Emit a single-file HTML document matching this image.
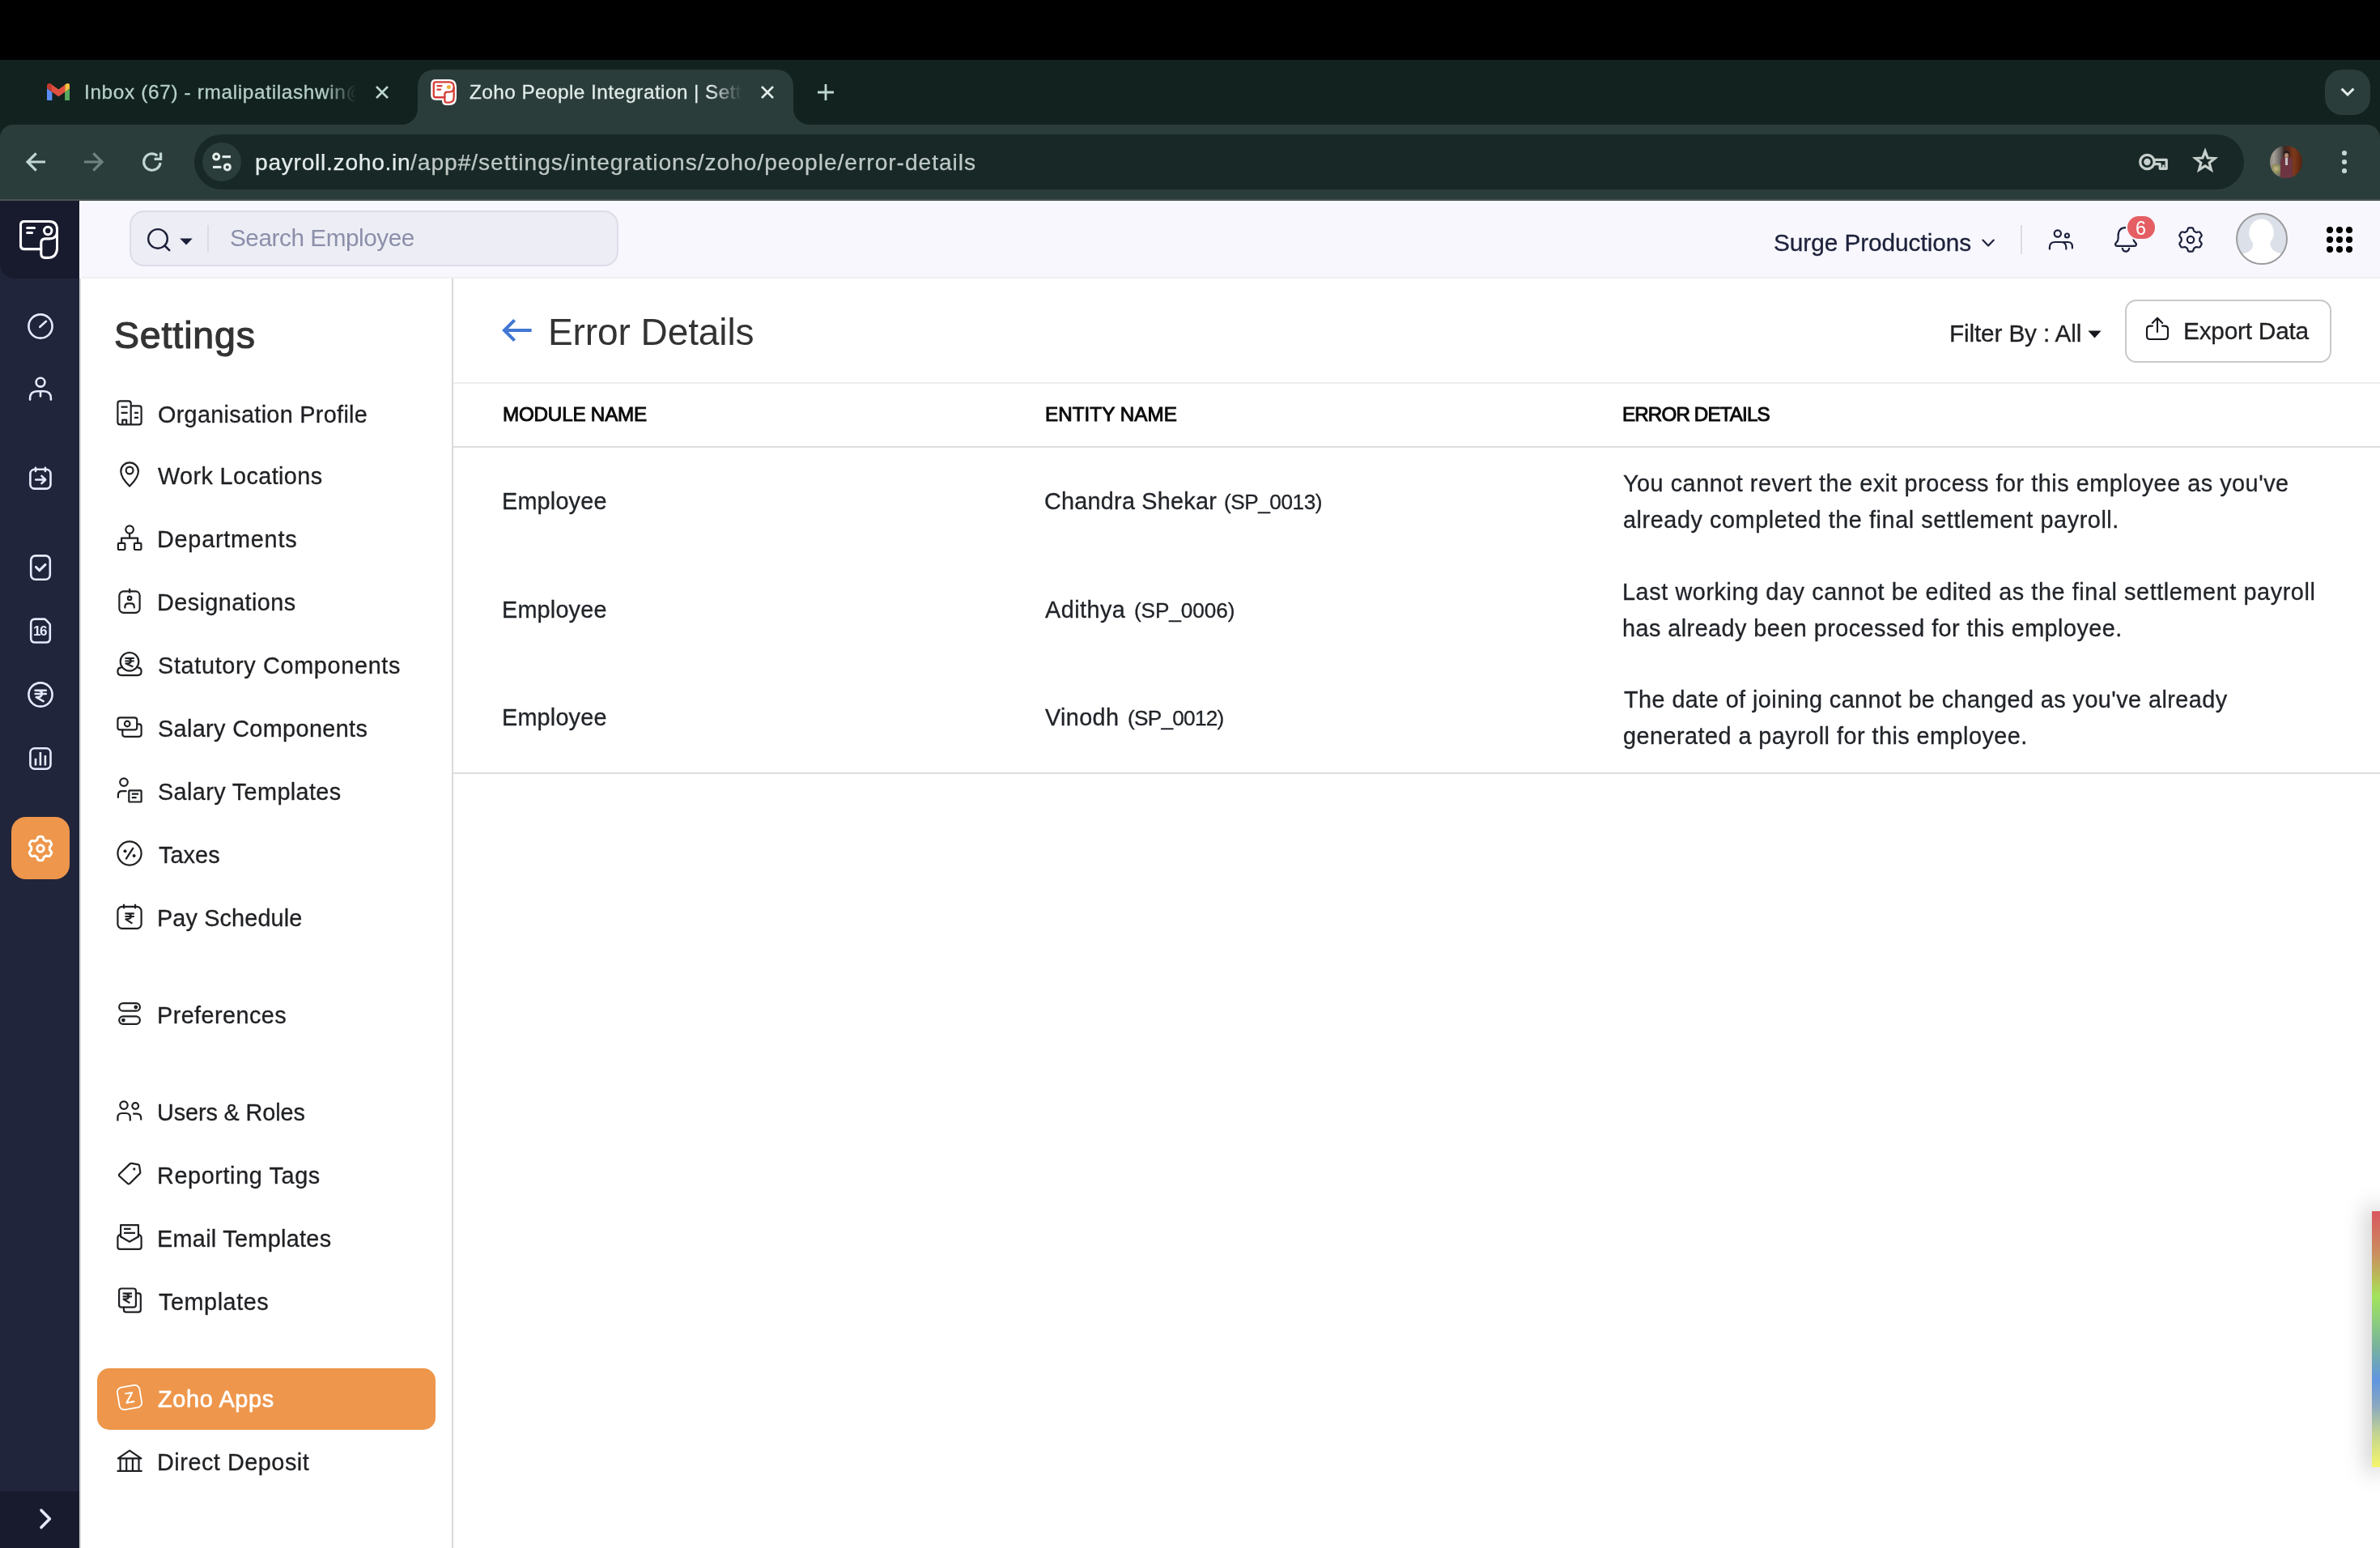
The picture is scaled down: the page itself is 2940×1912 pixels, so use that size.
<!DOCTYPE html>
<html lang="en">
<head>
<meta charset="utf-8">
<title>Zoho People Integration | Settings | Zoho Payroll</title>
<style>
html,body{margin:0;padding:0;background:#fff;}
body{width:2940px;height:1912px;overflow:hidden;font-family:'Liberation Sans',sans-serif;}
#root{position:relative;width:2940px;height:1912px;overflow:hidden;background:#fff;will-change:transform;}
#root div,#root svg,#root span.t{position:absolute;display:block;}
#root span.t{white-space:pre;}
#root div.clip{overflow:hidden;}
#root div.clip span.t{position:absolute;}

</style>
</head>
<body>
<div id="root">
<div style="left:0px;top:0px;width:2940px;height:74px;background:#000;"></div>
<div style="left:0px;top:74px;width:2940px;height:110px;background:#12221f;"></div>
<div style="left:0px;top:154px;width:2940px;height:94px;background:#2b3d3b;border-radius:16px 16px 0 0;"></div>
<div style="left:0px;top:246px;width:2940px;height:2px;background:#4b5452;"></div>
<div style="left:516px;top:86px;width:464px;height:70px;background:#2b3d3b;border-radius:20px 20px 0 0;"></div>
<div style="left:496px;top:134px;width:20px;height:20px;background:radial-gradient(circle at 0 0, rgba(0,0,0,0) 19.5px, #2b3d3b 20.5px);"></div>
<div style="left:980px;top:134px;width:20px;height:20px;background:radial-gradient(circle at 100% 0, rgba(0,0,0,0) 19.5px, #2b3d3b 20.5px);"></div>
<svg style="left:57.8px;top:102.7px;" width="28.6" height="21.5" viewBox="0 0 28.6 21.5" fill="none"><path d="M0 6.1 L6.4 10.7 V21.5 H2 Q0 21.5 0 19.5 Z" fill="#5a8cf4"/><path d="M28.6 6.1 L22.1 10.7 V21.5 H26.6 Q28.6 21.5 28.6 19.5 Z" fill="#58a95f"/><path d="M28.6 6.1 V3.1 A3.1 3.1 0 0 0 23.8 0.5 L22.1 1.8 V10.7 Z" fill="#f4c042"/><path d="M0 6.1 V3.1 A3.1 3.1 0 0 1 4.8 0.5 L6.4 1.8 V10.7 Z" fill="#c23a2d"/><path d="M5.9 1.4 L14.3 7.5 L22.4 1.6 V10.6 L14.3 16.3 L5.9 10.3 Z" fill="#e0503f"/></svg>
<div class="clip" style="left:100px;top:90px;width:342px;height:48px;">
<span class="t" style="left:4px;top:10px;font-size:24.3px;line-height:27px;color:#b7cfca;letter-spacing:0.679px;-webkit-text-stroke:0.3px #b7cfca;">Inbox (67) - rmalipatilashwin@</span>
</div>
<div style="left:400px;top:90px;width:42px;height:48px;background:linear-gradient(90deg, rgba(18,34,31,0), #12221f 95%);"></div>
<svg style="left:462px;top:104px;" width="20" height="20" viewBox="0 0 20 20" fill="none"><path d="M3 3 L17 17 M17 3 L3 17" stroke="#bdd5d0" stroke-width="2.6"/></svg>
<svg style="left:531px;top:97px;" width="34" height="34" viewBox="0 0 34 34" fill="none"><path d="M7 0.9 H23.8 Q33 0.9 33 10.2 V23.4 Q33 33.1 23.4 33.1 H20.8 Q15 33.1 15 27.2 V26.7 H7 Q1.2 26.7 1.2 21 V6.7 Q1.2 0.9 7 0.9 Z" fill="#fff"/><path d="M7.2 4.35 H23.6 Q29.65 4.35 29.65 10.4 V23.2 Q29.65 29.65 23.2 29.65 H21 Q18.35 29.65 18.35 27 V23.25 H7.2 Q4.75 23.25 4.75 20.8 V6.8 Q4.75 4.35 7.2 4.35 Z" stroke="#d53c37" stroke-width="2.3" fill="#fff"/><path d="M18.35 23.25 V19.6 Q18.35 16.6 21.4 16.6 H24 Q29.65 16.6 29.65 11" stroke="#d53c37" stroke-width="2.3"/><path d="M9.4 9.2 H14.4 M9.4 13.6 H13.2" stroke="#d53c37" stroke-width="2.2" stroke-linecap="round"/><circle cx="23.4" cy="10.6" r="2.5" fill="#eeae3a"/></svg>
<div class="clip" style="left:576px;top:90px;width:342px;height:48px;">
<span class="t" style="left:4px;top:10px;font-size:24.3px;line-height:27px;color:#e1ebe8;letter-spacing:0.458px;-webkit-text-stroke:0.3px #e1ebe8;">Zoho People Integration | Sett</span>
</div>
<div style="left:878px;top:90px;width:40px;height:48px;background:linear-gradient(90deg, rgba(43,61,59,0), #2b3d3b 95%);"></div>
<svg style="left:938px;top:104px;" width="20" height="20" viewBox="0 0 20 20" fill="none"><path d="M3 3 L17 17 M17 3 L3 17" stroke="#e3edea" stroke-width="2.6"/></svg>
<svg style="left:1008px;top:102px;" width="24" height="24" viewBox="0 0 24 24" fill="none"><path d="M12 2 V22 M2 12 H22" stroke="#bfd7d2" stroke-width="2.8"/></svg>
<div style="left:2872px;top:86px;width:56px;height:56px;background:#2b3d3b;border-radius:21px;"></div>
<svg style="left:2888px;top:101.4px;" width="24" height="24" viewBox="0 0 24 24" fill="none"><path d="M4.6 8.6 L12 16 L19.4 8.6" stroke="#e3edea" stroke-width="3"/></svg>
<svg style="left:30px;top:186px;" width="28" height="28" viewBox="0 0 28 28" fill="none"><path d="M26 14 H4.4 M14.7 3.3 L4 14 L14.7 24.7" stroke="#c0d7d2" stroke-width="3.2"/></svg>
<svg style="left:102px;top:186px;" width="28" height="28" viewBox="0 0 28 28" fill="none"><path d="M2 14 H23.6 M13.3 3.3 L24 14 L13.3 24.7" stroke="#6f8480" stroke-width="3.2"/></svg>
<svg style="left:174px;top:186px;" width="28" height="28" viewBox="0 0 28 28" fill="none"><path d="M24 15 A10.2 10.2 0 1 1 20.4 6.2" stroke="#c0d7d2" stroke-width="3.2"/><path d="M24.6 2.4 V10.4 H16.6" stroke="#c0d7d2" stroke-width="3.2"/></svg>
<div style="left:240px;top:166px;width:2532px;height:68px;background:#172826;border-radius:34px;"></div>
<div style="left:250px;top:176px;width:48px;height:48px;background:#2b3d3b;border-radius:24px;"></div>
<svg style="left:260px;top:186px;" width="28" height="28" viewBox="0 0 28 28" fill="none"><circle cx="7.2" cy="7.6" r="3.5" stroke="#e3edea" stroke-width="3"/><path d="M14.6 7.6 H25" stroke="#e3edea" stroke-width="3.1"/><circle cx="20.8" cy="20.4" r="3.5" stroke="#e3edea" stroke-width="3"/><path d="M3 20.4 H13.4" stroke="#e3edea" stroke-width="3.1"/></svg>
<span class="t" style="left:315px;top:184px;font-size:28.2px;line-height:32px;color:#e3ecea;letter-spacing:0.714px;-webkit-text-stroke:0.25px #e3ecea;">payroll.zoho.in</span>
<span class="t" style="left:507px;top:184px;font-size:28.2px;line-height:32px;color:#bec8c5;letter-spacing:0.950px;-webkit-text-stroke:0.25px #bec8c5;">/app#/settings/integrations/zoho/people/error-details</span>
<svg style="left:2640px;top:184px;" width="40" height="32" viewBox="0 0 40 32" fill="none"><circle cx="12.4" cy="16" r="8.7" stroke="#c7d0cd" stroke-width="3.3"/><circle cx="12.4" cy="16" r="4.2" fill="#c7d0cd"/><path d="M20.6 13.4 H36.2 V24.3 H28.2 V18.7 H20.6" stroke="#c7d0cd" stroke-width="3.3" stroke-linejoin="round"/><path d="M32.4 19.6 V23" stroke="#c7d0cd" stroke-width="2.6"/></svg>
<svg style="left:2706px;top:181px;" width="36" height="36" viewBox="0 0 36 36" fill="none"><path d="M18.00 5.80 L21.17 14.03 L29.98 14.51 L23.14 20.07 L25.41 28.59 L18.00 23.80 L10.59 28.59 L12.86 20.07 L6.02 14.51 L14.83 14.03 Z" stroke="#c7d0cd" stroke-width="3.2" stroke-linejoin="miter"/></svg>
<div class="clip" style="left:2804px;top:180px;width:40px;height:40px;border-radius:20px;background:linear-gradient(90deg,#8f8a84 0%,#a39d95 12%,#6f6b68 30%,#3a2a26 44%,#5b2a18 58%,#7c3a1c 74%,#6a2d14 88%,#4e2110 100%);"><div style="left:1px;top:22px;width:13px;height:16px;border-radius:6px;background:radial-gradient(circle at 50% 40%,#c9b98a 0%,#8a8a5a 45%,rgba(90,80,60,0) 75%);"></div><div style="left:13px;top:13px;width:15px;height:29px;border-radius:7px 7px 3px 3px;background:#6d3541;"></div><div style="left:17px;top:6px;width:7px;height:9px;border-radius:4px;background:#2b1d1c;"></div><div style="left:18px;top:9px;width:5px;height:6px;border-radius:3px;background:#b38a74;"></div><div style="left:19px;top:15px;width:3px;height:9px;background:#c9c4c8;"></div></div>
<svg style="left:2890px;top:184px;" width="12" height="32" viewBox="0 0 12 32" fill="none"><circle cx="6" cy="5" r="3.1" fill="#c0d7d2"/><circle cx="6" cy="16" r="3.1" fill="#c0d7d2"/><circle cx="6" cy="27" r="3.1" fill="#c0d7d2"/></svg>
<div style="left:98px;top:248px;width:2842px;height:1664px;background:#fff;"></div>
<div style="left:100px;top:248px;width:2840px;height:94px;background:#f7f7fd;"></div>
<div style="left:100px;top:342px;width:2840px;height:2px;background:#efeff0;"></div>
<div style="left:0px;top:248px;width:98px;height:1664px;background:#21253b;"></div>
<div style="left:0px;top:248px;width:98px;height:96px;background:#181b2e;border-radius:0 0 0 18px;"></div>
<div style="left:0px;top:1842px;width:98px;height:70px;background:#181b2e;"></div>
<svg style="left:24px;top:272px;" width="48" height="48" viewBox="0 0 48 48" fill="none"><path d="M6 1.5 H36.5 Q46.6 1.5 46.6 11.6 V33 Q46.6 46.4 35 46.4 H31.6 Q26.8 46.4 26.8 41.6 V35.6 H6 Q1.5 35.6 1.5 31.1 V6 Q1.5 1.5 6 1.5 Z" stroke="#fff" stroke-width="3.1" stroke-linejoin="round"/><path d="M26.8 35.6 V28 Q26.8 22.9 31.9 22.9 H37.2 Q46.6 22.9 46.6 13.4" stroke="#fff" stroke-width="3.1"/><path d="M9.6 9.6 H18.6 M9.6 15.5 H15.6" stroke="#fff" stroke-width="3" stroke-linecap="round"/><circle cx="35.2" cy="13" r="4.7" stroke="#fff" stroke-width="3"/></svg>
<svg style="left:34.0px;top:387.0px;overflow:visible;" width="32" height="32" viewBox="0 0 32 32" fill="none"><circle cx="16" cy="16" r="14.6" stroke="#e6eaff" stroke-width="2.6" stroke-linecap="round" stroke-linejoin="round"/><path d="M15.3 16.8 L23 9.8" stroke="#e6eaff" stroke-width="2.6" stroke-linecap="round" stroke-linejoin="round"/></svg>
<svg style="left:34.0px;top:463.6px;overflow:visible;" width="32" height="32" viewBox="0 0 32 32" fill="none"><circle cx="16" cy="8.2" r="5.4" stroke="#e6eaff" stroke-width="2.6" stroke-linecap="round" stroke-linejoin="round"/><path d="M3.1 29.6 V28 Q3.1 19.2 11.9 19.2 H20.1 Q28.9 19.2 28.9 28 V29.6 M16 19.4 V25.4" stroke="#e6eaff" stroke-width="2.6" stroke-linecap="round" stroke-linejoin="round"/></svg>
<svg style="left:34.0px;top:575.0px;overflow:visible;" width="32" height="32" viewBox="0 0 32 32" fill="none"><rect x="3.4" y="4.8" width="25.1" height="23.8" rx="5.4" stroke="#e6eaff" stroke-width="2.6" stroke-linecap="round" stroke-linejoin="round"/><path d="M10 2.8 V7 M21.9 2.8 V7" stroke="#e6eaff" stroke-width="2.6" stroke-linecap="round" stroke-linejoin="round"/><path d="M10.2 17.5 H21.8 M17.4 12.9 L22.1 17.5 L17.4 22.2" stroke="#e6eaff" stroke-width="2.6" stroke-linecap="round" stroke-linejoin="round"/></svg>
<svg style="left:34.0px;top:684.8px;overflow:visible;" width="32" height="32" viewBox="0 0 32 32" fill="none"><rect x="4.2" y="1.4" width="23.6" height="29.3" rx="5.6" stroke="#e6eaff" stroke-width="2.6" stroke-linecap="round" stroke-linejoin="round"/><path d="M10.4 15.4 L14.7 19.6 L22 12.4" stroke="#e6eaff" stroke-width="2.99" stroke-linecap="round" stroke-linejoin="round"/></svg>
<svg style="left:34.0px;top:763.0px;overflow:visible;" width="32" height="32" viewBox="0 0 32 32" fill="none"><path d="M9.4 1.6 H20.4 Q21.6 1.6 22.6 2.6 L26.8 6.8 Q27.8 7.8 27.8 9 V25.4 Q27.8 30.5 22.6 30.5 H9.4 Q4.2 30.5 4.2 25.4 V6.8 Q4.2 1.6 9.4 1.6 Z" stroke="#e6eaff" stroke-width="2.6" stroke-linecap="round" stroke-linejoin="round"/></svg>
<span class="t" style="left:41px;top:770px;font-size:17px;line-height:19px;color:#e6eaff;letter-spacing:-1.400px;font-weight:700;">16</span>
<svg style="left:34.0px;top:841.9px;overflow:visible;" width="32" height="32" viewBox="0 0 32 32" fill="none"><circle cx="16" cy="16" r="14.6" stroke="#e6eaff" stroke-width="2.6" stroke-linecap="round" stroke-linejoin="round"/><path d="M9.6 10.8 H22.8 M9.6 15 H22.8 M10.6 10.8 H12.6 Q17.8 10.8 17.8 15 Q17.8 19.2 10.8 19.2 L19.6 24.2" stroke="#e6eaff" stroke-width="2.6" stroke-linecap="round" stroke-linejoin="round"/></svg>
<svg style="left:34.0px;top:920.9px;overflow:visible;" width="32" height="32" viewBox="0 0 32 32" fill="none"><rect x="3.4" y="3.3" width="25.1" height="25.4" rx="5.4" stroke="#e6eaff" stroke-width="2.6" stroke-linecap="round" stroke-linejoin="round"/><path d="M10 15.8 V24.4 M15.9 8 V24.4 M21.9 12 V24.4" stroke="#e6eaff" stroke-width="2.6" stroke-linecap="butt" stroke-linejoin="round"/></svg>
<div style="left:14px;top:1009px;width:72px;height:77px;background:#ee964b;border-radius:18px;"></div>
<svg style="left:34.0px;top:1032.0px;overflow:visible;" width="32" height="32" viewBox="0 0 32 32" fill="none"><path d="M27.3 16.0 L27.3 15.6 L27.3 15.2 L27.2 14.8 L27.3 14.4 L27.6 14.0 L28.1 13.4 L28.6 12.9 L29.1 12.2 L29.5 11.6 L29.7 11.0 L29.6 10.5 L29.4 10.0 L29.2 9.6 L29.0 9.1 L28.7 8.7 L28.5 8.2 L28.2 7.8 L27.9 7.4 L27.6 6.9 L27.2 6.6 L26.6 6.5 L25.8 6.5 L25.0 6.6 L24.3 6.8 L23.6 7.0 L23.0 7.0 L22.6 6.9 L22.3 6.6 L22.0 6.4 L21.7 6.2 L21.3 6.0 L21.0 5.8 L20.6 5.7 L20.3 5.4 L20.0 4.9 L19.8 4.3 L19.6 3.5 L19.3 2.7 L19.0 2.1 L18.5 1.6 L18.0 1.4 L17.5 1.4 L17.0 1.3 L16.5 1.3 L16.0 1.3 L15.5 1.3 L15.0 1.3 L14.5 1.4 L14.0 1.4 L13.5 1.6 L13.0 2.1 L12.7 2.7 L12.4 3.5 L12.2 4.3 L12.0 4.9 L11.7 5.4 L11.4 5.7 L11.0 5.8 L10.7 6.0 L10.4 6.2 L10.0 6.4 L9.7 6.6 L9.4 6.9 L9.0 7.0 L8.4 7.0 L7.7 6.8 L7.0 6.6 L6.2 6.5 L5.4 6.5 L4.8 6.6 L4.4 6.9 L4.1 7.4 L3.8 7.8 L3.5 8.2 L3.3 8.7 L3.0 9.1 L2.8 9.6 L2.6 10.0 L2.4 10.5 L2.3 11.0 L2.5 11.6 L2.9 12.2 L3.4 12.9 L3.9 13.4 L4.4 14.0 L4.7 14.4 L4.8 14.8 L4.7 15.2 L4.7 15.6 L4.7 16.0 L4.7 16.4 L4.7 16.8 L4.8 17.2 L4.7 17.6 L4.4 18.0 L3.9 18.6 L3.4 19.1 L2.9 19.8 L2.5 20.4 L2.3 21.0 L2.4 21.5 L2.6 22.0 L2.8 22.4 L3.0 22.9 L3.3 23.4 L3.5 23.8 L3.8 24.2 L4.1 24.6 L4.4 25.1 L4.8 25.4 L5.4 25.5 L6.2 25.5 L7.0 25.4 L7.7 25.2 L8.4 25.0 L9.0 25.0 L9.4 25.1 L9.7 25.4 L10.0 25.6 L10.3 25.8 L10.7 26.0 L11.0 26.2 L11.4 26.3 L11.7 26.6 L12.0 27.1 L12.2 27.7 L12.4 28.5 L12.7 29.3 L13.0 29.9 L13.5 30.4 L14.0 30.6 L14.5 30.6 L15.0 30.7 L15.5 30.7 L16.0 30.7 L16.5 30.7 L17.0 30.7 L17.5 30.6 L18.0 30.6 L18.5 30.4 L19.0 29.9 L19.3 29.3 L19.6 28.5 L19.8 27.7 L20.0 27.1 L20.3 26.6 L20.6 26.3 L21.0 26.2 L21.3 26.0 L21.7 25.8 L22.0 25.6 L22.3 25.4 L22.6 25.1 L23.0 25.0 L23.6 25.0 L24.3 25.2 L25.0 25.4 L25.8 25.5 L26.6 25.5 L27.2 25.4 L27.6 25.1 L27.9 24.6 L28.2 24.2 L28.5 23.8 L28.7 23.4 L29.0 22.9 L29.2 22.4 L29.4 22.0 L29.6 21.5 L29.7 21.0 L29.5 20.4 L29.1 19.8 L28.6 19.1 L28.1 18.6 L27.6 18.0 L27.3 17.6 L27.2 17.2 L27.3 16.8 L27.3 16.4 Z" stroke="#fff" stroke-width="3.0" stroke-linecap="round" stroke-linejoin="round"/><circle cx="16" cy="16" r="4.2" stroke="#fff" stroke-width="3.0" stroke-linecap="round" stroke-linejoin="round"/></svg>
<svg style="left:44px;top:1860px;" width="24" height="32" viewBox="0 0 24 32" fill="none"><path d="M7 5.4 L17.4 16 L7 26.6" stroke="#e6eaff" stroke-width="3.6" stroke-linecap="round" stroke-linejoin="round"/></svg>
<div style="left:160px;top:260px;width:604px;height:69px;background:#ededf5;border-radius:18px;box-sizing:border-box;border:2px solid #dcdde8;"></div>
<svg style="left:180px;top:279px;" width="34" height="34" viewBox="0 0 34 34" fill="none"><circle cx="15" cy="15.9" r="11.8" stroke="#1b1f38" stroke-width="2.4"/><path d="M23.6 24.5 L29.2 30.1" stroke="#1b1f38" stroke-width="2.6" stroke-linecap="round"/></svg>
<svg style="left:222px;top:294px;" width="16" height="9" viewBox="0 0 16 9" fill="none"><path d="M0.2 0.4 H15.8 L8 8.6 Z" fill="#1b1f38"/></svg>
<div style="left:256px;top:278px;width:2px;height:34px;background:#dcdce8;"></div>
<span class="t" style="left:284px;top:277px;font-size:29.7px;line-height:33px;color:#8b8fa9;letter-spacing:-0.429px;">Search Employee</span>
<span class="t" style="left:2191px;top:283px;font-size:29.8px;line-height:33px;color:#1d213b;letter-spacing:-0.062px;-webkit-text-stroke:0.3px #1d213b;">Surge Productions</span>
<svg style="left:2445px;top:291px;" width="22" height="18" viewBox="0 0 22 18" fill="none"><path d="M4.4 5.6 L11.1 12.4 L17.8 5.6" stroke="#1d213b" stroke-width="2.2" stroke-linecap="round" stroke-linejoin="round"/></svg>
<div style="left:2496px;top:278px;width:2px;height:36px;background:#dcdce8;"></div>
<svg style="left:2530px;top:281px;" width="32" height="32" viewBox="0 0 32 32" fill="none"><circle cx="11.8" cy="7.5" r="4.1" stroke="#1b1f3b" stroke-width="2.2"/><circle cx="23.4" cy="10" r="2.5" stroke="#1b1f3b" stroke-width="2.2"/><path d="M1.9 26.6 V24.6 Q1.9 18 8.5 18 H15.7 Q22.3 18 22.3 24.6 V26.6 M18 18 H24.4 Q29.9 18 29.9 23.5 V25.4" stroke="#1b1f3b" stroke-width="2.2" stroke-linecap="round"/></svg>
<svg style="left:2610px;top:278px;" width="32" height="36" viewBox="0 0 32 36" fill="none"><path d="M16 3.2 Q6.6 3.2 6.6 13 V16.6 Q6.6 19.4 4.4 21.4 Q2.6 23.2 3.2 24.6 Q3.6 25.8 5.4 25.8 H26.6 Q28.4 25.8 28.8 24.6 Q29.4 23.2 27.6 21.4 Q25.4 19.4 25.4 16.6 V13 Q25.4 3.2 16 3.2 Z" stroke="#1b1f3b" stroke-width="2.2" stroke-linejoin="round"/><path d="M11.8 28.8 Q12.6 32.6 16 32.6 Q19.4 32.6 20.2 28.8" stroke="#1b1f3b" stroke-width="2.2" stroke-linecap="round"/></svg>
<div style="left:2626px;top:264.6px;width:38px;height:32.6px;background:#e45e63;border-radius:16.3px;box-sizing:border-box;border:2px solid #f7f7fd;"></div>
<span class="t" style="left:2638px;top:269px;font-size:23.4px;line-height:26px;color:#fff;">6</span>
<svg style="left:2690.0px;top:279.7px;overflow:visible;" width="32" height="32" viewBox="0 0 32 32" fill="none"><path d="M27.3 16.0 L27.3 15.6 L27.3 15.2 L27.2 14.8 L27.3 14.4 L27.6 14.0 L28.1 13.4 L28.6 12.9 L29.1 12.2 L29.5 11.6 L29.7 11.0 L29.6 10.5 L29.4 10.0 L29.2 9.6 L29.0 9.1 L28.7 8.7 L28.5 8.2 L28.2 7.8 L27.9 7.4 L27.6 6.9 L27.2 6.6 L26.6 6.5 L25.8 6.5 L25.0 6.6 L24.3 6.8 L23.6 7.0 L23.0 7.0 L22.6 6.9 L22.3 6.6 L22.0 6.4 L21.7 6.2 L21.3 6.0 L21.0 5.8 L20.6 5.7 L20.3 5.4 L20.0 4.9 L19.8 4.3 L19.6 3.5 L19.3 2.7 L19.0 2.1 L18.5 1.6 L18.0 1.4 L17.5 1.4 L17.0 1.3 L16.5 1.3 L16.0 1.3 L15.5 1.3 L15.0 1.3 L14.5 1.4 L14.0 1.4 L13.5 1.6 L13.0 2.1 L12.7 2.7 L12.4 3.5 L12.2 4.3 L12.0 4.9 L11.7 5.4 L11.4 5.7 L11.0 5.8 L10.7 6.0 L10.4 6.2 L10.0 6.4 L9.7 6.6 L9.4 6.9 L9.0 7.0 L8.4 7.0 L7.7 6.8 L7.0 6.6 L6.2 6.5 L5.4 6.5 L4.8 6.6 L4.4 6.9 L4.1 7.4 L3.8 7.8 L3.5 8.2 L3.3 8.7 L3.0 9.1 L2.8 9.6 L2.6 10.0 L2.4 10.5 L2.3 11.0 L2.5 11.6 L2.9 12.2 L3.4 12.9 L3.9 13.4 L4.4 14.0 L4.7 14.4 L4.8 14.8 L4.7 15.2 L4.7 15.6 L4.7 16.0 L4.7 16.4 L4.7 16.8 L4.8 17.2 L4.7 17.6 L4.4 18.0 L3.9 18.6 L3.4 19.1 L2.9 19.8 L2.5 20.4 L2.3 21.0 L2.4 21.5 L2.6 22.0 L2.8 22.4 L3.0 22.9 L3.3 23.4 L3.5 23.8 L3.8 24.2 L4.1 24.6 L4.4 25.1 L4.8 25.4 L5.4 25.5 L6.2 25.5 L7.0 25.4 L7.7 25.2 L8.4 25.0 L9.0 25.0 L9.4 25.1 L9.7 25.4 L10.0 25.6 L10.3 25.8 L10.7 26.0 L11.0 26.2 L11.4 26.3 L11.7 26.6 L12.0 27.1 L12.2 27.7 L12.4 28.5 L12.7 29.3 L13.0 29.9 L13.5 30.4 L14.0 30.6 L14.5 30.6 L15.0 30.7 L15.5 30.7 L16.0 30.7 L16.5 30.7 L17.0 30.7 L17.5 30.6 L18.0 30.6 L18.5 30.4 L19.0 29.9 L19.3 29.3 L19.6 28.5 L19.8 27.7 L20.0 27.1 L20.3 26.6 L20.6 26.3 L21.0 26.2 L21.3 26.0 L21.7 25.8 L22.0 25.6 L22.3 25.4 L22.6 25.1 L23.0 25.0 L23.6 25.0 L24.3 25.2 L25.0 25.4 L25.8 25.5 L26.6 25.5 L27.2 25.4 L27.6 25.1 L27.9 24.6 L28.2 24.2 L28.5 23.8 L28.7 23.4 L29.0 22.9 L29.2 22.4 L29.4 22.0 L29.6 21.5 L29.7 21.0 L29.5 20.4 L29.1 19.8 L28.6 19.1 L28.1 18.6 L27.6 18.0 L27.3 17.6 L27.2 17.2 L27.3 16.8 L27.3 16.4 Z" stroke="#1b1f3b" stroke-width="2.2" stroke-linecap="round" stroke-linejoin="round"/><circle cx="16" cy="16" r="4.2" stroke="#1b1f3b" stroke-width="2.2" stroke-linecap="round" stroke-linejoin="round"/></svg>
<div class="clip" style="left:2762px;top:263px;width:64px;height:64px;border-radius:32px;background:#dce0e9;box-sizing:border-box;border:2px solid #9c9c9e;"><svg style="left:0;top:0" width="60" height="60" viewBox="0 0 60 60"><ellipse cx="29.5" cy="22.4" rx="15.2" ry="17" fill="#fff"/><path d="M19 34 Q21 45.5 7 48.4 L-2 51 V62 H62 V51 L54 48.2 Q39.5 45.5 40.5 34 Z" fill="#fff"/></svg></div>
<svg style="left:2874px;top:280px;" width="32" height="32" viewBox="0 0 32 32" fill="none"><circle cx="4" cy="4" r="4.05" fill="#000"/><circle cx="4" cy="16" r="4.05" fill="#000"/><circle cx="4" cy="28" r="4.05" fill="#000"/><circle cx="16" cy="4" r="4.05" fill="#000"/><circle cx="16" cy="16" r="4.05" fill="#000"/><circle cx="16" cy="28" r="4.05" fill="#000"/><circle cx="28" cy="4" r="4.05" fill="#000"/><circle cx="28" cy="16" r="4.05" fill="#000"/><circle cx="28" cy="28" r="4.05" fill="#000"/></svg>
<div style="left:98px;top:344px;width:2px;height:1568px;background:#d8d8d8;"></div>
<div style="left:558px;top:344px;width:2px;height:1568px;background:#dadada;"></div>
<span class="t" style="left:141px;top:388px;font-size:46.5px;line-height:52px;color:#333;letter-spacing:0.857px;-webkit-text-stroke:1.15px #333;">Settings</span>
<div style="left:120px;top:1690px;width:418px;height:76px;background:#ee964b;border-radius:15px;"></div>
<svg style="left:144.0px;top:494.0px;overflow:visible;" width="32" height="32" viewBox="0 0 32 32" fill="none"><path d="M1.4 27.4 V4.3 Q1.4 1.4 4.3 1.4 H14.8 Q17.7 1.4 17.7 4.3 V30.3 M17.7 7.3 H27.7 Q30.6 7.3 30.6 10.2 V27.4 Q30.6 30.3 27.7 30.3 H4.3 Q1.4 30.3 1.4 27.4" stroke="#1f2023" stroke-width="2.2" stroke-linecap="round" stroke-linejoin="round"/><path d="M5.6 8.7 H13.6 M5.6 15.9 H13.6 M22 15.9 H27 M22 21.8 H27" stroke="#1f2023" stroke-width="2.2" stroke-linecap="butt" stroke-linejoin="round"/><path d="M7.3 30.2 V24.6 H12.2 V30.2" stroke="#1f2023" stroke-width="2.2" stroke-linecap="butt" stroke-linejoin="round"/></svg>
<span class="t" style="left:195px;top:496px;font-size:28.8px;line-height:32px;color:#1f2023;letter-spacing:0.311px;-webkit-text-stroke:0.3px #1f2023;">Organisation Profile</span>
<svg style="left:144.0px;top:569.9px;overflow:visible;" width="32" height="32" viewBox="0 0 32 32" fill="none"><path d="M16.1 30.5 C 11.4 25.8, 5.3 19.6, 5.3 12.2 A10.8 10.8 0 0 1 26.9 12.2 C 26.9 19.6, 20.8 25.8, 16.1 30.5 Z" stroke="#1f2023" stroke-width="2.2" stroke-linecap="round" stroke-linejoin="round"/><circle cx="16.1" cy="11" r="4.4" stroke="#1f2023" stroke-width="2.2" stroke-linecap="round" stroke-linejoin="round"/></svg>
<span class="t" style="left:195px;top:572px;font-size:28.8px;line-height:32px;color:#1f2023;letter-spacing:0.392px;-webkit-text-stroke:0.3px #1f2023;">Work Locations</span>
<svg style="left:144.0px;top:647.9px;overflow:visible;" width="32" height="32" viewBox="0 0 32 32" fill="none"><circle cx="16.1" cy="6.1" r="4.8" stroke="#1f2023" stroke-width="2.2" stroke-linecap="round" stroke-linejoin="round"/><path d="M16.1 11 V16.6 M6.1 22.6 V16.6 H26.1 V22.6" stroke="#1f2023" stroke-width="2.2" stroke-linecap="butt" stroke-linejoin="round"/><rect x="1.9" y="22.8" width="8.5" height="8.2" rx="1.2" stroke="#1f2023" stroke-width="2.2" stroke-linecap="round" stroke-linejoin="round"/><rect x="21.9" y="22.8" width="8.5" height="8.2" rx="1.2" stroke="#1f2023" stroke-width="2.2" stroke-linecap="round" stroke-linejoin="round"/></svg>
<span class="t" style="left:194px;top:650px;font-size:28.8px;line-height:32px;color:#1f2023;letter-spacing:0.770px;-webkit-text-stroke:0.3px #1f2023;">Departments</span>
<svg style="left:144.0px;top:725.9px;overflow:visible;" width="32" height="32" viewBox="0 0 32 32" fill="none"><rect x="3.4" y="4.4" width="25.2" height="26.4" rx="5.2" stroke="#1f2023" stroke-width="2.2" stroke-linecap="round" stroke-linejoin="round"/><path d="M16.1 0.9 V6.6" stroke="#1f2023" stroke-width="2.2" stroke-linecap="butt" stroke-linejoin="round"/><circle cx="16.1" cy="12.9" r="2.2" stroke="#1f2023" stroke-width="2.2" stroke-linecap="round" stroke-linejoin="round"/><path d="M10.4 24.6 V23.6 Q10.4 19.4 14.6 19.4 H17.6 Q21.8 19.4 21.8 23.6 V24.6" stroke="#1f2023" stroke-width="2.2" stroke-linecap="round" stroke-linejoin="round"/></svg>
<span class="t" style="left:194px;top:728px;font-size:28.8px;line-height:32px;color:#1f2023;letter-spacing:0.418px;-webkit-text-stroke:0.3px #1f2023;">Designations</span>
<svg style="left:144.0px;top:803.9px;overflow:visible;" width="32" height="32" viewBox="0 0 32 32" fill="none"><circle cx="16" cy="13.3" r="11.3" stroke="#1f2023" stroke-width="2.2" stroke-linecap="round" stroke-linejoin="round"/><path d="M5.6 20.6 Q1.4 20.6 1.4 25.3 Q1.4 30.1 6.2 30.1 H25.8 Q30.6 30.1 30.6 25.3 Q30.6 20.6 26.4 20.6" stroke="#1f2023" stroke-width="2.2" stroke-linecap="round" stroke-linejoin="round"/><path d="M10.4 9 H21.8 M10.4 12.5 H21.8 M11.0 9 H12.8 Q17.8 9 17.8 12.5 Q17.8 15.6 11.4 15.6 L20.4 19.6" stroke="#1f2023" stroke-width="2.2" stroke-linecap="butt" stroke-linejoin="round"/></svg>
<span class="t" style="left:195px;top:806px;font-size:28.8px;line-height:32px;color:#1f2023;letter-spacing:0.679px;-webkit-text-stroke:0.3px #1f2023;">Statutory Components</span>
<svg style="left:144.0px;top:881.9px;overflow:visible;" width="32" height="32" viewBox="0 0 32 32" fill="none"><rect x="1.4" y="4.4" width="23.8" height="15" rx="3" stroke="#1f2023" stroke-width="2.2" stroke-linecap="round" stroke-linejoin="round"/><circle cx="13.2" cy="12" r="3.3" stroke="#1f2023" stroke-width="2.2" stroke-linecap="round" stroke-linejoin="round"/><path d="M25.4 12.3 H27.6 Q30.6 12.3 30.6 15.3 V24.8 Q30.6 27.8 27.6 27.8 H10.3 Q7.3 27.8 7.3 24.8 V19.6" stroke="#1f2023" stroke-width="2.2" stroke-linecap="round" stroke-linejoin="round"/></svg>
<span class="t" style="left:195px;top:884px;font-size:28.8px;line-height:32px;color:#1f2023;letter-spacing:0.369px;-webkit-text-stroke:0.3px #1f2023;">Salary Components</span>
<svg style="left:144.0px;top:959.9px;overflow:visible;" width="32" height="32" viewBox="0 0 32 32" fill="none"><circle cx="9" cy="6.1" r="4.8" stroke="#1f2023" stroke-width="2.2" stroke-linecap="round" stroke-linejoin="round"/><path d="M1.9 25 V22 Q1.9 17.2 6.7 17.2 H11.6" stroke="#1f2023" stroke-width="2.2" stroke-linecap="round" stroke-linejoin="round"/><rect x="15.3" y="16.4" width="15.3" height="14.1" rx="0.8" stroke="#1f2023" stroke-width="2.2" stroke-linecap="round" stroke-linejoin="round"/><path d="M18.8 20.6 H27.2 M18.8 25.2 H24.6" stroke="#1f2023" stroke-width="2.2" stroke-linecap="butt" stroke-linejoin="round"/></svg>
<span class="t" style="left:195px;top:962px;font-size:28.8px;line-height:32px;color:#1f2023;letter-spacing:0.387px;-webkit-text-stroke:0.3px #1f2023;">Salary Templates</span>
<svg style="left:144.0px;top:1037.9px;overflow:visible;" width="32" height="32" viewBox="0 0 32 32" fill="none"><circle cx="16" cy="16" r="14.6" stroke="#1f2023" stroke-width="2.2" stroke-linecap="round" stroke-linejoin="round"/><path d="M20.3 9.6 L11.9 22.6" stroke="#1f2023" stroke-width="2.2" stroke-linecap="round" stroke-linejoin="round"/><circle cx="10.5" cy="13.2" r="2" fill="#1f2023"/><circle cx="21.6" cy="19" r="2" fill="#1f2023"/></svg>
<span class="t" style="left:196px;top:1040px;font-size:28.8px;line-height:32px;color:#1f2023;letter-spacing:0.075px;-webkit-text-stroke:0.3px #1f2023;">Taxes</span>
<svg style="left:144.0px;top:1115.9px;overflow:visible;" width="32" height="32" viewBox="0 0 32 32" fill="none"><rect x="1.4" y="3.8" width="29.2" height="27" rx="5.6" stroke="#1f2023" stroke-width="2.2" stroke-linecap="round" stroke-linejoin="round"/><path d="M9 0.8 V6.2 M23 0.8 V6.2" stroke="#1f2023" stroke-width="2.2" stroke-linecap="butt" stroke-linejoin="round"/><path d="M10.4 12.3 H21.8 M10.4 16.0 H21.8 M11.0 12.3 H12.8 Q17.8 12.3 17.8 16.0 Q17.8 19.3 11.4 19.3 L19.4 24.6" stroke="#1f2023" stroke-width="2.2" stroke-linecap="butt" stroke-linejoin="round"/></svg>
<span class="t" style="left:194px;top:1118px;font-size:28.8px;line-height:32px;color:#1f2023;letter-spacing:0.145px;-webkit-text-stroke:0.3px #1f2023;">Pay Schedule</span>
<svg style="left:144.0px;top:1235.9px;overflow:visible;" width="32" height="32" viewBox="0 0 32 32" fill="none"><rect x="3.2" y="3.2" width="25.7" height="9.5" rx="4.75" stroke="#1f2023" stroke-width="2.2" stroke-linecap="round" stroke-linejoin="round"/><rect x="3.2" y="19.3" width="25.7" height="9.5" rx="4.75" stroke="#1f2023" stroke-width="2.2" stroke-linecap="round" stroke-linejoin="round"/><circle cx="23.8" cy="8" r="2.4" fill="#1f2023"/><circle cx="8.4" cy="24.1" r="2.4" fill="#1f2023"/></svg>
<span class="t" style="left:194px;top:1238px;font-size:28.8px;line-height:32px;color:#1f2023;letter-spacing:0.430px;-webkit-text-stroke:0.3px #1f2023;">Preferences</span>
<svg style="left:144.0px;top:1355.9px;overflow:visible;" width="32" height="32" viewBox="0 0 32 32" fill="none"><circle cx="9" cy="9.1" r="4.7" stroke="#1f2023" stroke-width="2.2" stroke-linecap="round" stroke-linejoin="round"/><circle cx="23.2" cy="10" r="3.8" stroke="#1f2023" stroke-width="2.2" stroke-linecap="round" stroke-linejoin="round"/><path d="M1.4 28.4 V24.4 Q1.4 19 6.8 19 H11.4 Q16.8 19 16.8 24.4 V28.4 M20.2 19.6 H24.8 Q30.2 19.6 30.2 25 V27.4" stroke="#1f2023" stroke-width="2.2" stroke-linecap="butt" stroke-linejoin="round"/></svg>
<span class="t" style="left:194px;top:1358px;font-size:28.8px;line-height:32px;color:#1f2023;letter-spacing:-0.100px;-webkit-text-stroke:0.3px #1f2023;">Users &amp; Roles</span>
<svg style="left:144.0px;top:1433.9px;overflow:visible;" width="32" height="32" viewBox="0 0 32 32" fill="none"><path d="M18.6 2.9 L26.6 4.3 Q27.9 4.5 28.1 5.8 L29.3 13.6 Q29.5 14.8 28.6 15.6 L16.4 27.8 Q15 29.1 13.6 27.8 L3.6 18.8 Q2.2 17.4 3.6 16 L16.4 3.6 Q17.3 2.7 18.6 2.9 Z" stroke="#1f2023" stroke-width="2.2" stroke-linecap="round" stroke-linejoin="round"/><circle cx="21.8" cy="9.9" r="1.6" fill="#1f2023"/></svg>
<span class="t" style="left:194px;top:1436px;font-size:28.8px;line-height:32px;color:#1f2023;letter-spacing:0.615px;-webkit-text-stroke:0.3px #1f2023;">Reporting Tags</span>
<svg style="left:144.0px;top:1511.9px;overflow:visible;" width="32" height="32" viewBox="0 0 32 32" fill="none"><path d="M5.1 15.3 V1.1 H26.9 V15.3" stroke="#1f2023" stroke-width="2.2" stroke-linecap="round" stroke-linejoin="round"/><path d="M9 5.8 H17.6 M9 10.9 H23" stroke="#1f2023" stroke-width="2.2" stroke-linecap="butt" stroke-linejoin="round"/><path d="M5.1 12.5 L3 13.7 Q1.4 14.6 1.4 16.4 V28 Q1.4 30.8 4.2 30.8 H27.8 Q30.6 30.8 30.6 28 V16.4 Q30.6 14.6 29 13.7 L26.9 12.5" stroke="#1f2023" stroke-width="2.2" stroke-linecap="round" stroke-linejoin="round"/><path d="M5.1 15.5 L16 21.7 L26.9 15.5" stroke="#1f2023" stroke-width="2.2" stroke-linecap="round" stroke-linejoin="round"/></svg>
<span class="t" style="left:194px;top:1514px;font-size:28.8px;line-height:32px;color:#1f2023;letter-spacing:0.307px;-webkit-text-stroke:0.3px #1f2023;">Email Templates</span>
<svg style="left:144.0px;top:1589.9px;overflow:visible;" width="32" height="32" viewBox="0 0 32 32" fill="none"><rect x="3.1" y="1.5" width="20.8" height="23.2" rx="3" stroke="#1f2023" stroke-width="2.2" stroke-linecap="round" stroke-linejoin="round"/><path d="M24.1 7.4 H27 Q29.8 7.4 29.8 10.2 V27.8 Q29.8 30.6 27 30.6 H11.7 Q8.9 30.6 8.9 27.8 V24.9" stroke="#1f2023" stroke-width="2.2" stroke-linecap="round" stroke-linejoin="round"/><path d="M7.6 7.7 H19 M7.6 11.4 H19 M8.2 7.7 H10.0 Q15.0 7.7 15.0 11.4 Q15.0 14.7 8.6 14.7 L16.4 19.4" stroke="#1f2023" stroke-width="2.2" stroke-linecap="butt" stroke-linejoin="round"/></svg>
<span class="t" style="left:196px;top:1592px;font-size:28.8px;line-height:32px;color:#1f2023;letter-spacing:0.562px;-webkit-text-stroke:0.3px #1f2023;">Templates</span>
<svg style="left:144.0px;top:1709.9px;overflow:visible;" width="32" height="32" viewBox="0 0 32 32" fill="none"><g transform="rotate(-9.5 16 16)"><rect x="2.1" y="2.1" width="27.8" height="27.8" rx="5.8" stroke="#fff" stroke-width="1.8"/><text x="16.1" y="22.6" text-anchor="middle" font-family="Liberation Sans, sans-serif" font-size="18.6" fill="#fff" stroke="#fff" stroke-width="0.5">Z</text></g></svg>
<span class="t" style="left:195px;top:1712px;font-size:28.8px;line-height:32px;color:#fff;letter-spacing:0.675px;-webkit-text-stroke:0.7px #fff;">Zoho Apps</span>
<svg style="left:144.0px;top:1787.9px;overflow:visible;" width="32" height="32" viewBox="0 0 32 32" fill="none"><path d="M1.8 13.3 L16.1 3.7 L30.4 13.3 Z" stroke="#1f2023" stroke-width="2.2" stroke-linecap="round" stroke-linejoin="round"/><path d="M4.6 14 V28 M12.2 14 V28 M19.9 14 V28 M27.5 14 V28" stroke="#1f2023" stroke-width="2.2" stroke-linecap="butt" stroke-linejoin="round"/><path d="M0.6 28.9 H31.6" stroke="#1f2023" stroke-width="2.2" stroke-linecap="butt" stroke-linejoin="round"/></svg>
<span class="t" style="left:194px;top:1790px;font-size:28.8px;line-height:32px;color:#1f2023;letter-spacing:0.531px;-webkit-text-stroke:0.3px #1f2023;">Direct Deposit</span>
<svg style="left:618px;top:390px;" width="42" height="36" viewBox="0 0 42 36" fill="none"><path d="M38.6 18 H5.4 M17.6 5.4 L5 18 L17.6 30.6" stroke="#4277d4" stroke-width="4.1" stroke-linejoin="miter"/></svg>
<span class="t" style="left:677px;top:384px;font-size:46px;line-height:52px;color:#333;letter-spacing:-0.083px;">Error Details</span>
<span class="t" style="left:2408px;top:395px;font-size:29.8px;line-height:33px;color:#1f2023;letter-spacing:-0.157px;-webkit-text-stroke:0.3px #1f2023;">Filter By : All</span>
<svg style="left:2579px;top:408px;" width="17" height="10" viewBox="0 0 17 10" fill="none"><path d="M0.4 0.6 H16.6 L8.5 9.6 Z" fill="#15171c"/></svg>
<div style="left:2625px;top:370px;width:255px;height:78px;background:#fff;border-radius:14px;box-sizing:border-box;border:2px solid #c9c9cc;"></div>
<svg style="left:2649px;top:390px;" width="32" height="32" viewBox="0 0 32 32" fill="none"><path d="M16 3 V20 M9.8 9 L16 2.8 L22.2 9" stroke="#15171c" stroke-width="2.1" stroke-linecap="round" stroke-linejoin="round"/><path d="M10 12.6 H7 Q3 12.6 3 16.6 V25 Q3 29 7 29 H25 Q29 29 29 25 V16.6 Q29 12.6 25 12.6 H22" stroke="#15171c" stroke-width="2.1" stroke-linecap="round"/></svg>
<span class="t" style="left:2697px;top:392px;font-size:29.8px;line-height:33px;color:#1f2023;letter-spacing:-0.220px;-webkit-text-stroke:0.3px #1f2023;">Export Data</span>
<div style="left:560px;top:472px;width:2380px;height:2px;background:#ededee;"></div>
<span class="t" style="left:621px;top:498px;font-size:24.2px;line-height:27px;color:#0b0b0c;letter-spacing:-0.190px;-webkit-text-stroke:0.95px #0b0b0c;">MODULE NAME</span>
<span class="t" style="left:1291px;top:498px;font-size:24.2px;line-height:27px;color:#0b0b0c;letter-spacing:0.060px;-webkit-text-stroke:0.95px #0b0b0c;">ENTITY NAME</span>
<span class="t" style="left:2004px;top:498px;font-size:24.2px;line-height:27px;color:#0b0b0c;letter-spacing:-0.867px;-webkit-text-stroke:0.95px #0b0b0c;">ERROR DETAILS</span>
<div style="left:560px;top:551px;width:2380px;height:2px;background:#dddde0;"></div>
<span class="t" style="left:620px;top:603px;font-size:28.8px;line-height:32px;color:#212429;letter-spacing:0.200px;-webkit-text-stroke:0.3px #212429;">Employee</span>
<span class="t" style="left:1290px;top:603px;font-size:28.8px;line-height:32px;color:#212429;letter-spacing:0.238px;-webkit-text-stroke:0.3px #212429;">Chandra Shekar</span>
<span class="t" style="left:1512px;top:605px;font-size:26.2px;line-height:30px;color:#212429;letter-spacing:-0.463px;-webkit-text-stroke:0.3px #212429;">(SP_0013)</span>
<span class="t" style="left:2005px;top:581px;font-size:28.8px;line-height:32px;color:#212429;letter-spacing:0.520px;-webkit-text-stroke:0.3px #212429;">You cannot revert the exit process for this employee as you've</span>
<span class="t" style="left:2005px;top:626px;font-size:28.8px;line-height:32px;color:#212429;letter-spacing:0.576px;-webkit-text-stroke:0.3px #212429;">already completed the final settlement payroll.</span>
<span class="t" style="left:620px;top:737px;font-size:28.8px;line-height:32px;color:#212429;letter-spacing:0.200px;-webkit-text-stroke:0.3px #212429;">Employee</span>
<span class="t" style="left:1291px;top:737px;font-size:28.8px;line-height:32px;color:#212429;letter-spacing:0.467px;-webkit-text-stroke:0.3px #212429;">Adithya</span>
<span class="t" style="left:1401px;top:739px;font-size:26.2px;line-height:30px;color:#212429;letter-spacing:-0.100px;-webkit-text-stroke:0.3px #212429;">(SP_0006)</span>
<span class="t" style="left:2004px;top:715px;font-size:28.8px;line-height:32px;color:#212429;letter-spacing:0.591px;-webkit-text-stroke:0.3px #212429;">Last working day cannot be edited as the final settlement payroll</span>
<span class="t" style="left:2004px;top:760px;font-size:28.8px;line-height:32px;color:#212429;letter-spacing:0.457px;-webkit-text-stroke:0.3px #212429;">has already been processed for this employee.</span>
<span class="t" style="left:620px;top:870px;font-size:28.8px;line-height:32px;color:#212429;letter-spacing:0.200px;-webkit-text-stroke:0.3px #212429;">Employee</span>
<span class="t" style="left:1291px;top:870px;font-size:28.8px;line-height:32px;color:#212429;letter-spacing:0.360px;-webkit-text-stroke:0.3px #212429;">Vinodh</span>
<span class="t" style="left:1393px;top:872px;font-size:26.2px;line-height:30px;color:#212429;letter-spacing:-0.738px;-webkit-text-stroke:0.3px #212429;">(SP_0012)</span>
<span class="t" style="left:2006px;top:848px;font-size:28.8px;line-height:32px;color:#212429;letter-spacing:0.444px;-webkit-text-stroke:0.3px #212429;">The date of joining cannot be changed as you've already</span>
<span class="t" style="left:2005px;top:893px;font-size:28.8px;line-height:32px;color:#212429;letter-spacing:0.470px;-webkit-text-stroke:0.3px #212429;">generated a payroll for this employee.</span>
<div style="left:560px;top:954px;width:2380px;height:2px;background:#dddde0;"></div>
<div style="left:2930px;top:1496px;width:10px;height:316px;background:linear-gradient(180deg,#d9575f 0%,#c9905e 17%,#b6c257 27%,#a3e35c 33%,#8ed07a 42%,#78b29c 53%,#5f95e0 66%,#8aa8c0 76%,#c3d492 87%,#f4f56a 100%);box-shadow:0 0 28px 6px rgba(0,0,0,0.22);"></div>
</div>
</body>
</html>
